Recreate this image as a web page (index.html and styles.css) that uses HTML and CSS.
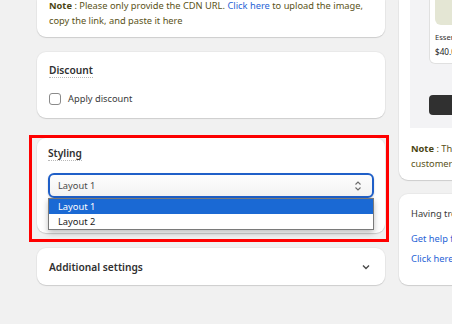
FILE: index.html
```html
<!DOCTYPE html>
<html>
<head>
<meta charset="utf-8">
<link rel="stylesheet" href="styles.css">
</head>
<body>
<div class="page">
  <div class="main">
    <div class="card card-top">
      <p class="note"><b>Note</b> : Please only provide the CDN URL. <a class="link">Click here</a> to upload the image,<br>copy the link, and paste it here</p>
    </div>
    <div class="card discount">
      <h2 class="title">Discount</h2>
      <label class="check"><span class="box"></span>Apply discount</label>
    </div>
    <div class="highlight">
      <div class="card styling">
        <h2 class="title">Styling</h2>
        <div class="select-wrap">
          <div class="select">
            <span>Layout 1</span>
            <svg class="updown" width="8" height="12" viewBox="0 0 8 12"><path d="M1.5 4.5 L4 2 L6.5 4.5 M1.5 7.5 L4 10 L6.5 7.5" fill="none" stroke="#6b6b6b" stroke-width="1.1"/></svg>
          </div>
          <ul class="listbox">
            <li class="opt active">Layout 1</li>
            <li class="opt">Layout 2</li>
          </ul>
        </div>
      </div>
    </div>
    <div class="card additional">
      <span class="add-title">Additional settings</span>
      <svg width="10" height="6" viewBox="0 0 10 6"><path d="M2 1.5 L5 4.5 L8 1.5" fill="none" stroke="#4a4a4a" stroke-width="1.4"/></svg>
    </div>
  </div>
  <div class="side">
    <div class="card side-top">
      <div class="preview">
        <div class="product">
          <div class="img"></div>
          <div class="pname">Essential</div>
          <div class="price">$40.00</div>
        </div>
        <div class="btn"></div>
      </div>
      <p class="note side-note"><b>Note</b> : This will be shown to your<br>customers on checkout</p>
    </div>
    <div class="card help">
      <p class="help-q">Having trouble?</p>
      <a class="link first">Get help from us</a>
      <a class="link">Click here to view</a>
    </div>
  </div>
</div>
</body>
</html>
```
FILE: styles.css
```css
* { box-sizing: border-box; margin: 0; padding: 0; }
html, body { background: #f1f1f1; }
body {
  font-family: "Noto Sans", "Open Sans", sans-serif;
  font-size: 9.3px;
  color: #303030;
  width: 452px;
  height: 324px;
  overflow: hidden;
}
.page {
  display: flex;
  gap: 14px;
  padding-left: 37px;
}
.main {
  width: 348px;
  flex: none;
  display: flex;
  flex-direction: column;
}
.side {
  width: 130px;
  flex: none;
  display: flex;
  flex-direction: column;
  gap: 14px;
}
.card {
  background: #fff;
  border-radius: 9px;
  box-shadow: 0 1px 1px rgba(0,0,0,0.12), 0 0 0 1px rgba(0,0,0,0.03);
}
.card-top {
  border-top-left-radius: 0;
  border-top-right-radius: 0;
  height: 37px;
  padding: 0 12px;
}
.note {
  color: #5a5218;
  font-size: 9.3px;
  line-height: 15px;
  margin-top: -2px;
  white-space: nowrap;
}
.note b { color: #4b4514; font-weight: 700; }
.link { color: #1f63d6; text-decoration: none; }
.discount {
  margin-top: 15px;
  height: 66px;
  padding: 11px 12px 0;
}
.title {
  font-size: 10.2px;
  font-weight: 600;
  color: #303030;
  display: inline-block;
  line-height: 14px;
  border-bottom: 1px dotted #b8b8b8;
}
.check {
  display: flex;
  align-items: center;
  gap: 7px;
  margin-top: 14px;
  font-size: 9.3px;
  color: #3a3a3a;
}
.box {
  width: 12px;
  height: 12px;
  border: 1px solid #8a8a8a;
  border-radius: 3px;
  background: #fff;
}
.highlight {
  margin-top: 17px;
  margin-left: -8px;
  width: 360px;
  border: 3px solid #ff0000;
  padding: 0 1px 6px 5px;
}
.styling {
  height: 95px;
  padding: 8px 11px 0;
}
.select-wrap {
  position: relative;
  margin-top: 12px;
}
.select {
  height: 25px;
  border: 2px solid #1f5fc8;
  border-radius: 6px;
  background: linear-gradient(#fdfdfd, #f3f3f3);
  display: flex;
  align-items: center;
  justify-content: space-between;
  padding: 0 8px;
  font-size: 9.3px;
  color: #4a4a4a;
  box-shadow: 0 1px 2px rgba(0,0,0,0.2);
}
.updown { margin-right: 2px; }
.listbox {
  position: absolute;
  left: 0;
  right: 0;
  top: 25px;
  list-style: none;
  border: 1px solid #7a7a7a;
  background: #fff;
  box-shadow: 0 3px 6px rgba(0,0,0,0.25);
}
.opt {
  height: 15px;
  line-height: 15px;
  padding-left: 9px;
  font-size: 9.3px;
  color: #1a1a1a;
}
.opt.active { background: #1a69d4; color: #fff; }
.additional {
  margin-top: 6px;
  height: 37px;
  padding: 0 14px 0 12px;
  display: flex;
  align-items: center;
  justify-content: space-between;
}
.add-title { font-size: 10.2px; font-weight: 600; color: #303030; }
.side-top {
  height: 180px;
  border-top-left-radius: 0;
  border-top-right-radius: 0;
  padding: 0 0 0 11px;
}
.preview {
  background: #f3f3f5;
  height: 128px;
  padding: 0 0 0 19px;
  display: flex;
  flex-direction: column;
}
.product {
  background: #fff;
  border: 1px solid #e0e0e0;
  border-top: none;
  border-radius: 0 0 0 6px;
  height: 64px;
  padding: 0 0 0 5px;
}
.img {
  background: #e4e6d4;
  height: 25px;
  border-radius: 0 0 0 6px;
}
.pname { font-size: 7.6px; line-height: 12px; margin-top: 6px; color: #303030; }
.price { font-size: 8.2px; line-height: 13px; color: #202020; margin-top: 2px; }
.btn {
  margin-top: 31px;
  height: 20px;
  background: #303030;
  border-radius: 4px 0 0 4px;
}
.side-note { margin-top: 13px; padding-left: 1px; }
.help {
  height: 91px;
  padding: 13px 0 0 12px;
  display: flex;
  flex-direction: column;
  white-space: nowrap;
  font-size: 9.3px;
  line-height: 13px;
}
.help-q { color: #3a3a3a; }
.help .link.first { margin-top: 12px; }
.help .link + .link { margin-top: 7px; }
```
